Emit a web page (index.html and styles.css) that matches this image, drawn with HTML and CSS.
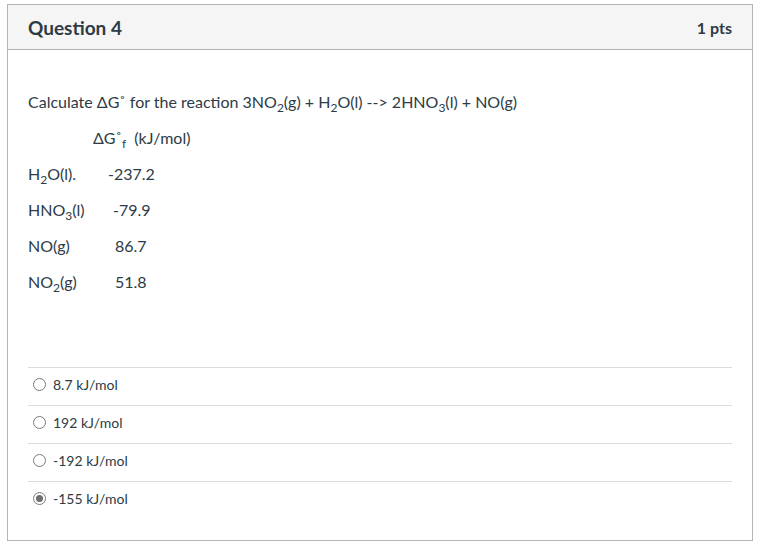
FILE: index.html
```html
<!DOCTYPE html>
<html>
<head>
<meta charset="utf-8">
<link rel="stylesheet" href="styles.css">
</head>
<body>
<div class="question">
  <div class="header">
    <span class="title">Question 4</span>
    <span class="pts">1 pts</span>
  </div>
  <div class="body">
    <div class="text">
      <p>Calculate ΔG˚ for the reaction 3NO<sub>2</sub>(g) + H<sub>2</sub>O(l) --&gt; 2HNO<sub>3</sub>(l) + NO(g)</p>
      <p class="colhead">ΔG˚<sub>f</sub>&nbsp; (kJ/mol)</p>
      <p class="row"><span class="lbl">H<sub>2</sub>O(l).</span><span class="val">-237.2</span></p>
      <p class="row"><span class="lbl">HNO<sub>3</sub>(l)</span><span class="val v2">-79.9</span></p>
      <p class="row"><span class="lbl">NO(g)</span><span class="val v3">86.7</span></p>
      <p class="row"><span class="lbl">NO<sub>2</sub>(g)</span><span class="val v3">51.8</span></p>
    </div>
    <div class="answers">
      <div class="answer"><span class="radio"></span><span>8.7 kJ/mol</span></div>
      <div class="answer"><span class="radio"></span><span>192 kJ/mol</span></div>
      <div class="answer"><span class="radio"></span><span>-192 kJ/mol</span></div>
      <div class="answer"><span class="radio checked"></span><span>-155 kJ/mol</span></div>
    </div>
  </div>
</div>
</body>
</html>
```
FILE: styles.css
```css
html, body {
  margin: 0;
  padding: 0;
  background: #fff;
}
body {
  font-family: Lato, "Liberation Sans", sans-serif;
  color: #2d3b45;
  padding: 4px 0 0 7px;
}
.question {
  width: 746px;
  height: 537px;
  box-sizing: border-box;
  border: 1px solid #b4b4b4;
  display: flex;
  flex-direction: column;
}
.header {
  height: 45px;
  box-sizing: border-box;
  background: #f5f5f5;
  border-bottom: 1px solid #b4b4b4;
  display: flex;
  align-items: center;
  justify-content: space-between;
  padding: 0 20px;
}
.title {
  font-weight: bold;
  font-size: 19px;
}
.pts {
  font-weight: bold;
  font-size: 16px;
}
.body {
  padding: 28px 20px 0 20px;
}
.text p {
  margin: 12px 0;
  font-size: 16px;
  line-height: 24px;
}
sub {
  font-size: 12px;
  line-height: 0;
  vertical-align: -4px;
}
.colhead {
  padding-left: 65px;
}
.row {
  display: flex;
}
.lbl {
  width: 80px;
}
.v2 { padding-left: 5px; }
.v3 { padding-left: 7px; }
.answers {
  margin-top: 73px;
}
.answer {
  border-top: 1px solid #dcdcdc;
  height: 38px;
  box-sizing: border-box;
  padding-top: 7px;
  display: flex;
  align-items: flex-start;
  font-size: 14px;
  line-height: 20px;
}
.radio {
  width: 13px;
  height: 13px;
  box-sizing: border-box;
  border: 1px solid #7a7a7a;
  border-radius: 50%;
  margin: 3px 7px 0 5px;
  display: flex;
  align-items: center;
  justify-content: center;
}
.radio.checked::after {
  content: "";
  width: 7px;
  height: 7px;
  border-radius: 50%;
  background: #6e6e6e;
}
```
